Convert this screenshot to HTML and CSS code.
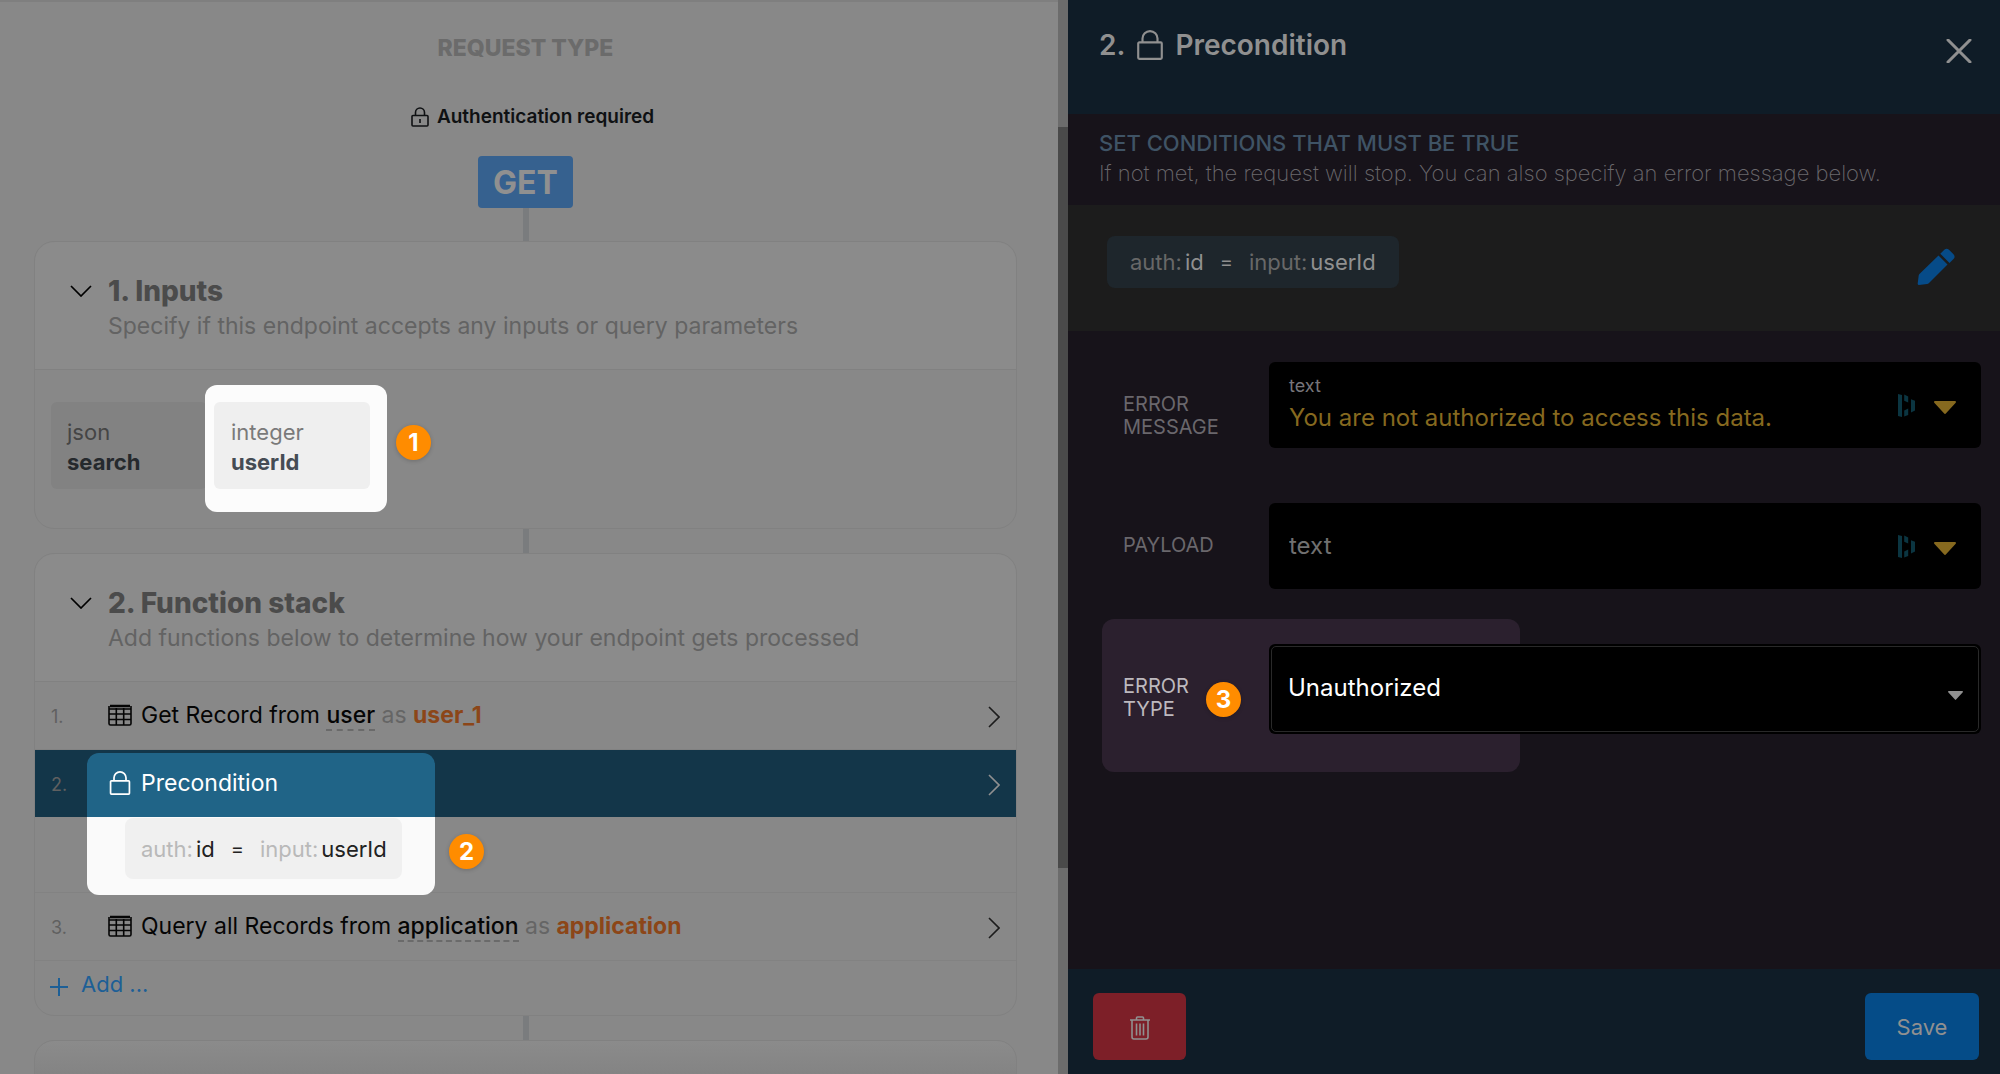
FILE: index.html
```html
<!DOCTYPE html>
<html lang="en">
<head>
    <meta charset="UTF-8">
    <meta name="viewport" content="width=device-width, initial-scale=1.0">
    <title>Precondition</title>
    <link rel="stylesheet" href="styles.css">
</head>
<body>
    <svg class="sprite" aria-hidden="true">
        <symbol id="i-down" viewBox="0 0 22 12"><path d="M1 1l10 10L21 1" fill="none" stroke="currentColor" stroke-width="1.700"/></symbol>
        <symbol id="i-right" viewBox="0 0 12 22"><path d="M1 1l10 10L1 21" fill="none" stroke="currentColor" stroke-width="1.600"/></symbol>
        <symbol id="i-lock" viewBox="0 0 24 28"><path d="M2 11.500h20a1 1 0 0 1 1 1V26a1 1 0 0 1-1 1H2a1 1 0 0 1-1-1V12.500a1 1 0 0 1 1-1zM5 11.500V8a7 7 0 0 1 14 0v3.500" fill="none" stroke="currentColor" stroke-width="2"/></symbol>
        <symbol id="i-table" viewBox="0 0 24 22"><path d="M2 1.500h20M2 2.500h20M1 2v17.500a1.500 1.500 0 0 0 1.500 1.500h19a1.500 1.500 0 0 0 1.500-1.500V2M1 5h22M1 10h22M1 15.500h22M8.300 4v17M15.700 4v17" fill="none" stroke="currentColor" stroke-width="1.600"/></symbol>
        <symbol id="i-bars" viewBox="0 0 17 23"><path d="M0 0l4 1v22l-4-1zM6.200.600l4 1.800v6l-4-1.600zM6.200 16.400l4-1.800v6.400l-4 1.600zM13 5.200l4 1.600v9.800l-4 1.800z" fill="currentColor"/></symbol>
        <symbol id="i-caret" viewBox="0 0 22 13"><path d="M1 0h20a1 1 0 0 1 .7 1.700L11.800 12.500a1 1 0 0 1-1.600 0L.3 1.700A1 1 0 0 1 1 0z" fill="currentColor"/></symbol>
    </svg>

    <main class="builder">
        <h1>REQUEST TYPE</h1>
        <div class="auth">
            <svg width="18" height="20" viewBox="0 0 18 20"><path d="M2 8.500h14a1 1 0 0 1 1 1V18a1 1 0 0 1-1 1H2a1 1 0 0 1-1-1V9.500a1 1 0 0 1 1-1zM4.500 8.500V5.500a4.500 4.500 0 0 1 9 0v3M9 12v4" fill="none" stroke="currentColor" stroke-width="1.600"/></svg>
            Authentication required
        </div>
        <div class="method">GET</div>
        <div class="link long"></div>

        <section class="card">
            <header class="card-head">
                <svg class="toggle" width="22" height="12"><use href="#i-down"/></svg>
                <h2>1. Inputs</h2>
                <p>Specify if this endpoint accepts any inputs or query parameters</p>
            </header>
            <div class="inputs">
                <div class="param">
                    <span class="type">json</span>
                    <span class="name">search</span>
                </div>
                <div class="param lit">
                    <div class="spot"></div>
                    <span class="type">integer</span>
                    <span class="name">userId</span>
                    <span class="badge">1</span>
                </div>
            </div>
        </section>
        <div class="link"></div>

        <section class="card">
            <header class="card-head">
                <svg class="toggle" width="22" height="12"><use href="#i-down"/></svg>
                <h2>2. Function stack</h2>
                <p>Add functions below to determine how your endpoint gets processed</p>
            </header>
            <div class="step">
                <div class="row">
                    <span class="num">1.</span>
                    <svg class="icon" width="24" height="22"><use href="#i-table"/></svg>
                    <span class="label">Get Record from <a href="#user">user</a> <i>as</i> <b>user_1</b></span>
                    <svg class="more" width="12" height="22"><use href="#i-right"/></svg>
                </div>
            </div>
            <div class="step current">
                <div class="spot"></div>
                <div class="row">
                    <span class="num">2.</span>
                    <svg class="icon" width="24" height="24"><use href="#i-lock"/></svg>
                    <span class="label">Precondition</span>
                    <svg class="more" width="12" height="22"><use href="#i-right"/></svg>
                </div>
                <div class="cond">
                    <span class="src">auth:</span><span class="var">id</span>
                    <span class="op">=</span>
                    <span class="src">input:</span><span class="var">userId</span>
                </div>
                <span class="badge">2</span>
            </div>
            <div class="step">
                <div class="row">
                    <span class="num">3.</span>
                    <svg class="icon" width="24" height="22"><use href="#i-table"/></svg>
                    <span class="label">Query all Records from <a href="#application">application</a> <i>as</i> <b>application</b></span>
                    <svg class="more" width="12" height="22"><use href="#i-right"/></svg>
                </div>
            </div>
            <button class="add" type="button">
                <svg width="18" height="18" viewBox="0 0 18 18"><path d="M9 0v18M0 9h18" stroke="currentColor" stroke-width="2"/></svg>
                Add ...
            </button>
        </section>
        <div class="link"></div>

        <section class="card next"></section>
    </main>

    <div class="scrollbar"><div class="thumb"></div></div>

    <aside class="panel">
        <header class="panel-head">
            <h2>2. <svg width="26" height="30"><use href="#i-lock"/></svg> Precondition</h2>
            <button class="close" type="button" aria-label="Close">
                <svg width="26" height="24" viewBox="0 0 26 24"><path d="M2 1l22 22M24 1L2 23" stroke="currentColor" stroke-width="3" stroke-linecap="round"/></svg>
            </button>
        </header>
        <div class="intro">
            <h3>SET CONDITIONS THAT MUST BE TRUE</h3>
            <p>If not met, the request will stop. You can also specify an error message below.</p>
        </div>
        <div class="expression">
            <div class="cond">
                <span class="src">auth:</span><span class="var">id</span>
                <span class="op">=</span>
                <span class="src">input:</span><span class="var">userId</span>
            </div>
            <button class="edit" type="button" aria-label="Edit">
                <svg width="38" height="38" viewBox="0 0 38 38"><path d="M21.500 7.500l9 9L12 35q-.8.800-2 1l-8 1q-1.500 0-1.300-1.500l1-8q.2-1 1-1.800zM23.300 5.700l4-4q2.300-1.900 4.700 0l4.500 4.500q2.200 2.500 0 4.800l-4 4z" fill="currentColor"/></svg>
            </button>
        </div>
        <form class="form">
            <div class="field">
                <label for="message">ERROR MESSAGE</label>
                <div class="box">
                    <div class="value">
                        <span class="hint">text</span>
                        <input type="text" id="message" value="You are not authorized to access this data.">
                    </div>
                    <svg class="bars" width="17" height="23"><use href="#i-bars"/></svg>
                    <svg class="caret" width="22" height="13"><use href="#i-caret"/></svg>
                </div>
            </div>
            <div class="field">
                <label for="payload">PAYLOAD</label>
                <div class="box">
                    <div class="value">
                        <input type="text" id="payload" placeholder="text">
                    </div>
                    <svg class="bars" width="17" height="23"><use href="#i-bars"/></svg>
                    <svg class="caret" width="22" height="13"><use href="#i-caret"/></svg>
                </div>
            </div>
            <div class="field lit">
                <div class="spot"></div>
                <label for="errorType">ERROR TYPE</label>
                <div class="box select">
                    <select id="errorType">
                        <option>Unauthorized</option>
                    </select>
                    <svg class="arrow" width="15" height="9"><use href="#i-caret"/></svg>
                </div>
                <span class="badge">3</span>
            </div>
        </form>
        <footer class="panel-foot">
            <button class="delete" type="button" aria-label="Delete">
                <svg width="20" height="24" viewBox="0 0 20 24"><path d="M0 4h20M6.500 4V2a1 1 0 0 1 1-1h5a1 1 0 0 1 1 1v2M2 4v17a2 2 0 0 0 2 2h12a2 2 0 0 0 2-2V4M6.500 7.500v12M10 7.500v12M13.500 7.500v12" fill="none" stroke="currentColor" stroke-width="1.600"/></svg>
            </button>
            <button class="save" type="button">Save</button>
        </footer>
    </aside>
</body>
</html>
```
FILE: styles.css
```css
* {
    margin: 0;
    padding: 0;
    box-sizing: border-box;
}

body {
    display: grid;
    grid-template-columns: minmax(0, 1fr) 10px 46.6%;
    height: 100vh;
    overflow: hidden;
    font-family: Inter, "Liberation Sans", sans-serif;
    font-size: 24px;
    background: #888;
}

button,
input,
select {
    font: inherit;
    color: inherit;
    background: none;
    border: none;
}

svg {
    flex: none;
}

.sprite {
    position: absolute;
    width: 0;
    height: 0;
}

/* left side: endpoint builder */
.builder {
    display: flex;
    flex-direction: column;
    overflow: hidden;
    padding: 32px 41px 0 34px;
    border-top: 2px solid #7f7f7f;
}

.builder > * {
    flex: none;
}

h1 {
    font-size: 23px;
    font-weight: 800;
    line-height: 28px;
    text-align: center;
    color: #6b6b6b;
}

.auth {
    display: flex;
    align-items: center;
    justify-content: center;
    gap: 8px;
    margin: 43px 0 27px 14px;
    font-size: 19px;
    font-weight: 600;
    line-height: 24px;
    color: #0f1113;
}

.method {
    align-self: center;
    padding: 1px 15px 0;
    border-radius: 4px;
    font-size: 32px;
    font-weight: 700;
    line-height: 51px;
    color: #909090;
    background: #36618f;
}

.link {
    align-self: center;
    width: 6px;
    height: 24px;
    background: #7a7c7e;
}

.link.long {
    height: 33px;
}

.card {
    border: 1px solid #818181;
    border-radius: 20px;
}

.card-head {
    position: relative;
    padding: 31px 32px 26px 73px;
    border-bottom: 1px solid #818181;
    border-radius: 20px 20px 0 0;
    background: #8b8b8b;
}

.card-head h2 {
    font-size: 28px;
    font-weight: 800;
    line-height: 36px;
    color: #4b4b4b;
}

.card-head p {
    font-size: 23px;
    line-height: 34px;
    color: #636363;
}

.toggle {
    position: absolute;
    top: 43px;
    left: 35px;
}

.inputs {
    display: flex;
    gap: 7px;
    padding: 32px 16px 39px;
}

.param {
    position: relative;
    display: flex;
    flex-direction: column;
    min-width: 156px;
    padding: 15px 16px 12px;
    border-radius: 6px;
    font-size: 22px;
    line-height: 30px;
    background: #828282;
}

.param .type {
    color: #454545;
}

.param .name {
    font-weight: 700;
    color: #25292d;
}

.param.lit {
    z-index: 1;
    padding-left: 17px;
}

.param.lit .type {
    color: #7a7a7a;
}

.param.lit .name {
    color: #454c54;
}

.spot {
    position: absolute;
    z-index: -1;
    border-radius: 12px;
}

.param .spot {
    z-index: -2;
    inset: -17px -17px -23px -9px;
    background: #fcfcfc;
}

/* repaint the chip over its highlight */
.param.lit::before {
    content: "";
    position: absolute;
    z-index: -1;
    inset: 0;
    border-radius: 6px;
    background: #efefef;
}

.badge {
    position: absolute;
    display: flex;
    align-items: center;
    justify-content: center;
    width: 35px;
    height: 35px;
    border-radius: 50%;
    font-size: 24px;
    font-weight: 700;
    line-height: 35px;
    color: #fff;
    background: #ff8c00;
    box-shadow: 0 1px 4px rgba(0, 0, 0, 0.2);
}

.param .badge {
    top: 23px;
    left: 182px;
}

.step {
    position: relative;
    border-bottom: 1px solid #828282;
}

.row {
    display: flex;
    align-items: center;
    padding: 17px 16px 18px;
    font-size: 23px;
    line-height: 32px;
    color: #050505;
}

.num {
    width: 57px;
    margin-top: 3px;
    font-size: 18px;
    line-height: 29px;
    color: #606060;
}

.label {
    flex: 1;
    margin-left: 9px;
}

.label a {
    font-weight: 500;
    color: inherit;
    text-decoration: none;
    border-bottom: 2px dashed #6a6a6a;
}

.label i {
    font-style: normal;
    color: #656565;
}

.label b {
    font-weight: 700;
    color: #8c4618;
}

.more {
    margin-top: 4px;
    color: #1c1c1c;
}

.current {
    z-index: 1;
}

.current .row {
    color: #fff;
    background: #133649;
}

.current .icon,
.current .label {
    position: relative;
    z-index: 1;
}

.current .more {
    color: #909090;
}

.current .spot {
    z-index: 0;
    top: 3px;
    left: 52px;
    width: 348px;
    height: 142px;
    background: linear-gradient(#206487 64px, #fafafa 64px);
}

.cond {
    position: relative;
    z-index: 1;
    display: flex;
    align-items: center;
    width: max-content;
    font-size: 22px;
}

.cond .src {
    margin-right: 3px;
}

.cond .op {
    margin: 0 16px;
    font-size: 20px;
}

.step .cond {
    height: 61px;
    margin: 1px 0 13px 90px;
    padding: 0 15px 0 16px;
    border-radius: 8px;
    color: #222;
    background: #f0f0f0;
}

.step .cond .src {
    color: #b9b9b9;
}

.step .badge {
    top: 84px;
    left: 414px;
}

.add {
    display: flex;
    align-items: center;
    gap: 13px;
    padding: 8px 15px 16px;
    font-size: 22px;
    line-height: 30px;
    color: #1d5f96;
}

.add svg {
    margin-top: 6px;
}

.next {
    height: 120px;
    background: linear-gradient(#8b8b8b, #828282 40px);
}

.scrollbar {
    background: #6c6c6c;
}

.thumb {
    height: 69%;
    margin-top: 127px;
    background: #4a4a4a;
}

/* right side: precondition settings */
.panel {
    display: flex;
    flex-direction: column;
    color: #909090;
    background: #17131a;
}

.panel-head {
    display: flex;
    justify-content: space-between;
    align-items: flex-start;
    height: 114px;
    padding: 27px 28px 0 31px;
    background: #0f1c27;
}

.panel-head h2 {
    display: flex;
    align-items: center;
    gap: 12px;
    font-size: 28px;
    font-weight: 600;
    line-height: 36px;
}

.close {
    height: 24px;
    margin-top: 12px;
}

.intro {
    height: 91px;
    padding: 15px 31px 0;
    font-size: 22px;
}

.intro h3 {
    font-size: 22px;
    font-weight: 500;
    line-height: 29px;
    color: #3f5365;
}

.intro p {
    font-weight: 200;
    line-height: 30px;
    color: #6a686c;
}

.expression {
    display: flex;
    justify-content: space-between;
    align-items: flex-start;
    height: 126px;
    padding: 31px 45px 0 39px;
    background: #1c1c1c;
}

.expression .cond {
    height: 52px;
    padding: 0 23px;
    border-radius: 8px;
    background: #1e262c;
}

.expression .src {
    color: #686868;
}

.edit {
    height: 38px;
    margin-top: 12px;
    color: #064b88;
}

.form {
    flex: 1;
    padding: 31px 19px 0 55px;
}

.field {
    position: relative;
    z-index: 0;
    display: flex;
    margin-bottom: 55px;
}

.field label {
    width: 146px;
    padding: 31px 46px 0 0;
    font-size: 20px;
    line-height: 23px;
    color: #6a676c;
}

.box {
    flex: 1;
    display: flex;
    align-items: center;
    height: 86px;
    padding: 0 25px 0 20px;
    border-radius: 6px;
    background: #000;
}

.value {
    flex: 1;
    display: flex;
    flex-direction: column;
    padding-bottom: 2px;
}

.hint {
    margin-bottom: 5px;
    font-size: 18px;
    line-height: 22px;
    color: #77757a;
}

.value input {
    height: 32px;
    color: #86691f;
}

.value input::placeholder {
    color: #707070;
    opacity: 1;
}

.bars {
    margin-right: 19px;
    color: #0b3541;
}

.caret {
    margin-top: 5px;
    color: #86691f;
}

.box.select {
    position: relative;
    height: 90px;
    padding: 2px;
}

.box select {
    flex: 1;
    height: 86px;
    padding: 0 16px 4px;
    border: 1px solid #292929;
    border-radius: 5px;
    appearance: none;
    color: #fff;
    background: #000;
}

.arrow {
    position: absolute;
    top: 47px;
    right: 18px;
    pointer-events: none;
}

.field.lit label {
    color: #bdb9be;
}

.field .spot {
    top: -25px;
    left: -21px;
    width: 418px;
    height: 153px;
    background: #2b202e;
}

.field .badge {
    top: 38px;
    left: 83px;
}

.panel-foot {
    display: flex;
    justify-content: space-between;
    padding: 24px 21px 14px 25px;
    background: #0f1c27;
}

.panel-foot button {
    height: 67px;
    border-radius: 6px;
    font-size: 22px;
}

.delete {
    width: 93px;
    background: #7d1f28;
}

.delete svg {
    vertical-align: middle;
}

.save {
    width: 114px;
    background: #054c88;
}
```
